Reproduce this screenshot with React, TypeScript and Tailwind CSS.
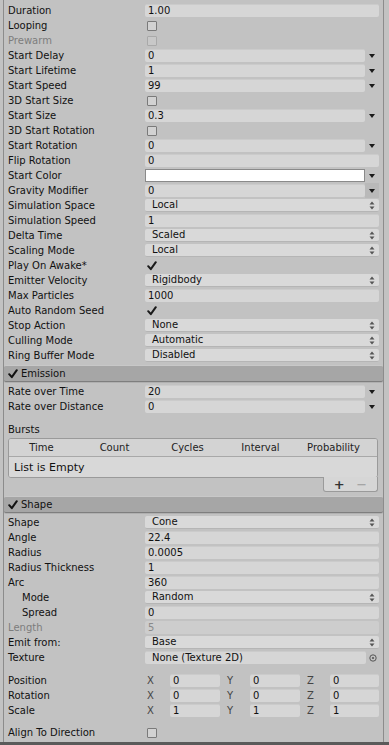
import React from "react";

const FONT = { fontFamily: '"DejaVu Sans", "Liberation Sans", sans-serif' };

function DownArrow() {
  return (
    <svg width="6" height="5" viewBox="0 0 6 5">
      <path d="M0 1 L6 1 L3 5 Z" fill="#1a1a1a" />
    </svg>
  );
}

function UpDown() {
  return (
    <svg width="6" height="9" viewBox="0 0 6 9">
      <path d="M0.5 3.5 L5.5 3.5 L3 0.5 Z" fill="#555" />
      <path d="M0.5 5.5 L5.5 5.5 L3 8.5 Z" fill="#555" />
    </svg>
  );
}

function Check({ size = 10, color = "#1a1a1a" }: { size?: number; color?: string }) {
  return (
    <svg width={size} height={size} viewBox="0 0 10 10">
      <path d="M1.2 5.2 L3.8 8.2 L8.8 1.2" stroke={color} strokeWidth="2" fill="none" strokeLinecap="round" strokeLinejoin="round" />
    </svg>
  );
}

function Label({ text, indent, disabled }: { text: string; indent?: boolean; disabled?: boolean }) {
  return (
    <div
      className={
        "w-[141px] shrink-0 whitespace-nowrap text-[10px] leading-none " +
        (indent ? "pl-[18px] " : "pl-[4px] ") +
        (disabled ? "text-[#7d7d7d]" : "text-[#111]")
      }
    >
      {text}
    </div>
  );
}

function Row({ children }: { children: React.ReactNode }) {
  return <div className="h-[15px] flex items-center">{children}</div>;
}

function FullField({ label, value, indent, disabled }: { label: string; value: string; indent?: boolean; disabled?: boolean }) {
  return (
    <Row>
      <Label text={label} indent={indent} disabled={disabled} />
      <div
        className={
          "flex-1 mr-[4px] h-[13px] flex items-center pl-[3px] text-[10px] leading-none rounded-[2px] " +
          (disabled ? "bg-[#cdcdcd] text-[#8a8a8a]" : "bg-[#d6d6d6] border-t border-[#cbcbcb] text-[#111]")
        }
      >
        {value}
      </div>
    </Row>
  );
}

function CurveField({ label, value }: { label: string; value: string }) {
  return (
    <Row>
      <Label text={label} />
      <div className="w-[220px] h-[13px] flex items-center pl-[3px] text-[10px] leading-none text-[#111] bg-[#d6d6d6] border-t border-[#cbcbcb] rounded-[2px]">
        {value}
      </div>
      <div className="w-[14px] h-[13px] flex items-center justify-center">
        <DownArrow />
      </div>
    </Row>
  );
}

function PopupField({ label, value, indent }: { label: string; value: string; indent?: boolean }) {
  return (
    <Row>
      <Label text={label} indent={indent} />
      <div className="flex-1 mr-[4px] h-[13px] flex items-center justify-between pl-[7px] pr-[4px] text-[10px] leading-none text-[#111] bg-[#d9d9d9] border-b border-[#b5b5b5] rounded-[2px]">
        <span>{value}</span>
        <UpDown />
      </div>
    </Row>
  );
}

function CheckRow({ label, checked, disabled }: { label: string; checked?: boolean; disabled?: boolean }) {
  return (
    <Row>
      <Label text={label} disabled={disabled} />
      <div className="pl-[2px] flex items-center">
        {checked ? (
          <div className="w-[10px] h-[10px] flex items-center justify-center">
            <Check />
          </div>
        ) : (
          <div
            className={
              "w-[10px] h-[10px] border rounded-[1px] " +
              (disabled ? "border-[#a9a9a9] bg-[#c8c8c8]" : "border-[#7a7a7a] bg-[#d2d2d2]")
            }
          />
        )}
      </div>
    </Row>
  );
}

function SectionHeader({ title }: { title: string }) {
  return (
    <div className="h-[17px] flex items-center gap-[3px] pl-[4px] bg-[#a6a6a6] border-t border-[#c8c8c8] border-b border-b-[#7e7e7e] rounded-[2px] shadow-[0_1px_0_#b0b0b0]">
      <Check size={10} color="#111" />
      <span className="text-[10px] leading-none text-[#111]">{title}</span>
    </div>
  );
}

function VecRow({ label, v }: { label: string; v: [string, string, string] }) {
  const axes = ["X", "Y", "Z"];
  return (
    <Row>
      <Label text={label} />
      <div className="flex items-center gap-[5px]">
        {axes.map((a, i) => (
          <div key={a} className="flex items-center">
            <div className="w-[25px] pl-[2px] text-[10px] leading-none text-[#444]">{a}</div>
            <div
              className={
                (i === 2 ? "w-[49px] " : "w-[50px] ") +
                "h-[13px] flex items-center pl-[3px] text-[10px] leading-none text-[#111] bg-[#d6d6d6] border-t border-[#cbcbcb] rounded-[2px]"
              }
            >
              {v[i]}
            </div>
          </div>
        ))}
      </div>
    </Row>
  );
}

export default function App() {
  return (
    <div className="w-[389px] h-[745px] bg-[#c2c2c2] relative overflow-hidden flex" style={FONT}>
      <div className="w-[3px] shrink-0" />
      <div className="w-[381px] shrink-0 h-full border-l border-r border-[#8c8c8c] pt-[3px] flex flex-col">
        <FullField label="Duration" value="1.00" />
        <CheckRow label="Looping" />
        <CheckRow label="Prewarm" disabled />
        <CurveField label="Start Delay" value="0" />
        <CurveField label="Start Lifetime" value="1" />
        <CurveField label="Start Speed" value="99" />
        <CheckRow label="3D Start Size" />
        <CurveField label="Start Size" value="0.3" />
        <CheckRow label="3D Start Rotation" />
        <CurveField label="Start Rotation" value="0" />
        <FullField label="Flip Rotation" value="0" />
        <Row>
          <Label text="Start Color" />
          <div className="w-[220px] h-[13px] bg-white border border-[#8a8a8a]" />
          <div className="w-[14px] h-[13px] flex items-center justify-center">
            <DownArrow />
          </div>
        </Row>
        <Row>
          <Label text="Gravity Modifier" />
          <div className="w-[220px] h-[13px] flex items-center pl-[3px] text-[10px] leading-none text-[#111] bg-[#d6d6d6] border-t border-[#cbcbcb] rounded-[2px]">
            0
          </div>
          <div className="w-[14px] h-[15px] flex items-center justify-center bg-[#b9b9b9]">
            <DownArrow />
          </div>
        </Row>
        <PopupField label="Simulation Space" value="Local" />
        <FullField label="Simulation Speed" value="1" />
        <PopupField label="Delta Time" value="Scaled" />
        <PopupField label="Scaling Mode" value="Local" />
        <CheckRow label="Play On Awake*" checked />
        <PopupField label="Emitter Velocity" value="Rigidbody" />
        <FullField label="Max Particles" value="1000" />
        <CheckRow label="Auto Random Seed" checked />
        <PopupField label="Stop Action" value="None" />
        <PopupField label="Culling Mode" value="Automatic" />
        <PopupField label="Ring Buffer Mode" value="Disabled" />

        <div className="mt-[2px]">
          <SectionHeader title="Emission" />
        </div>
        <div className="mt-[2px]">
          <CurveField label="Rate over Time" value="20" />
          <CurveField label="Rate over Distance" value="0" />
        </div>

        <div className="mt-[8px]">
          <Row>
            <Label text="Bursts" />
          </Row>
        </div>
        <div className="mt-[1px] ml-[4px] mr-[5px]">
          <div className="border border-[#9a9a9a] rounded-[3px] bg-[#d6d6d6] overflow-hidden">
            <div className="h-[18px] flex items-center -ml-[4px] border-b border-[#a8a8a8] bg-[#d3d3d3]">
              {["Time", "Count", "Cycles", "Interval", "Probability"].map((c) => (
                <div key={c} className="w-[73px] text-center text-[10px] leading-none text-[#222]">
                  {c}
                </div>
              ))}
            </div>
            <div className="h-[20px] flex items-center pl-[5px] text-[11px] leading-none text-[#111] bg-[#d8d8d8]">
              List is Empty
            </div>
          </div>
          <div className="flex justify-end">
            <div className="w-[55px] h-[15px] -mt-[1px] border border-t-0 border-[#9a9a9a] rounded-b-[3px] bg-[#d6d6d6] flex items-center justify-around px-[4px]">
              <span className="text-[13px] leading-none font-bold text-[#333]">+</span>
              <span className="text-[13px] leading-none text-[#9a9a9a]">−</span>
            </div>
          </div>
        </div>

        <div className="mt-[4px]">
          <SectionHeader title="Shape" />
        </div>
        <div className="mt-[2px]">
          <PopupField label="Shape" value="Cone" />
          <FullField label="Angle" value="22.4" />
          <FullField label="Radius" value="0.0005" />
          <FullField label="Radius Thickness" value="1" />
          <FullField label="Arc" value="360" />
          <PopupField label="Mode" value="Random" indent />
          <FullField label="Spread" value="0" indent />
          <FullField label="Length" value="5" disabled />
          <PopupField label="Emit from:" value="Base" />
          <Row>
            <Label text="Texture" />
            <div className="w-[221px] h-[13px] flex items-center pl-[7px] text-[10px] leading-none text-[#111] bg-[#d6d6d6] border-t border-[#cbcbcb] rounded-[2px]">
              None (Texture 2D)
            </div>
            <div className="w-[13px] h-[13px] flex items-center justify-center">
              <svg width="8" height="8" viewBox="0 0 8 8">
                <circle cx="4" cy="4" r="3.2" stroke="#555" strokeWidth="1" fill="none" />
                <circle cx="4" cy="4" r="1.1" fill="#555" />
              </svg>
            </div>
          </Row>
        </div>
        <div className="mt-[8px]">
          <VecRow label="Position" v={["0", "0", "0"]} />
          <VecRow label="Rotation" v={["0", "0", "0"]} />
          <VecRow label="Scale" v={["1", "1", "1"]} />
        </div>
        <div className="mt-[7px]">
          <CheckRow label="Align To Direction" />
        </div>
      </div>
      <div className="absolute left-0 right-0 bottom-0 h-[3px] bg-[#5a5a5a]" />
    </div>
  );
}
